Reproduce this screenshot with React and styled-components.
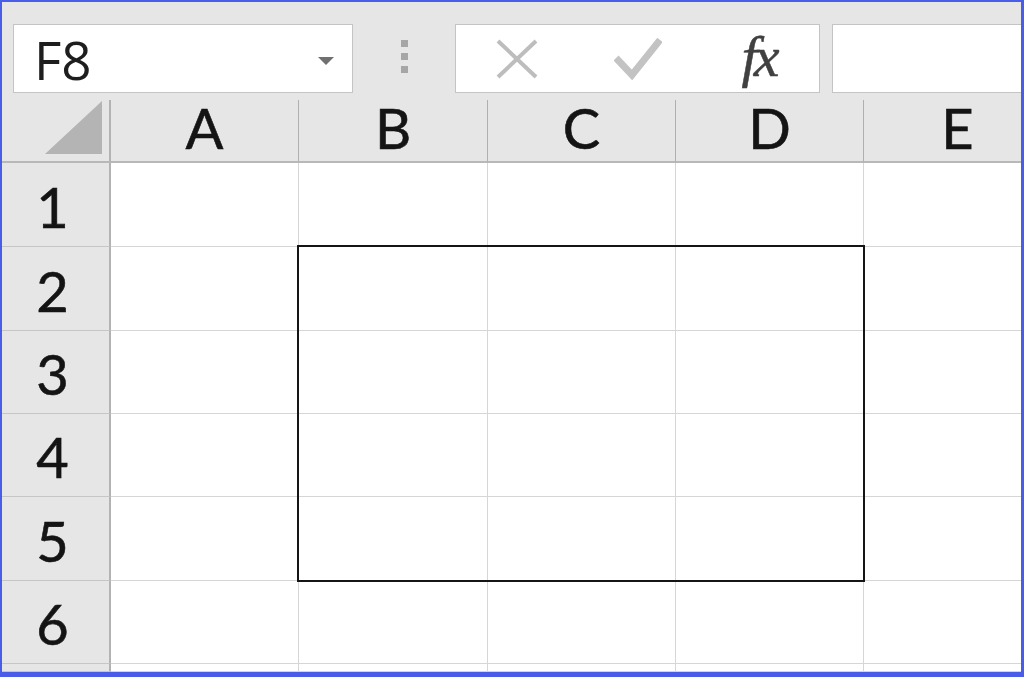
import React from "react";
import styled, { createGlobalStyle } from "styled-components";

const Global = createGlobalStyle`
  html, body { margin: 0; padding: 0; background: #ffffff; }
  * { box-sizing: border-box; }
`;

const Frame = styled.div`
  width: 1024px;
  height: 677px;
  border: 2px solid #4a5de8;
  border-right-width: 3px;
  border-bottom-width: 5px;
  background: #e6e6e6;
  overflow: hidden;
  display: flex;
  flex-direction: column;
`;

const Toolbar = styled.div`
  height: 98px;
  flex: none;
  display: flex;
  align-items: flex-start;
  padding: 22px 0 0 11px;
`;

const Box = styled.div`
  height: 69px;
  background: #ffffff;
  border: 1px solid #c4c4c4;
  display: flex;
  align-items: center;
`;

const NameBox = styled(Box)`
  width: 340px;
  justify-content: space-between;
  padding: 0 18px 0 20px;
  font-family: "Open Sans", "Noto Sans", sans-serif;
  font-size: 53px;
  color: #1e1e1e;
  line-height: 1;
`;

const NameText = styled.span`
  margin-top: 2px;
`;

const DropArrow = styled.span`
  width: 0;
  height: 0;
  border-left: 8px solid transparent;
  border-right: 8px solid transparent;
  border-top: 8px solid #707070;
  margin-top: 4px;
`;

const Grip = styled.div`
  width: 102px;
  height: 69px;
  display: flex;
  flex-direction: column;
  align-items: center;
  padding-top: 16px;
  gap: 6px;
`;

const Dot = styled.span`
  width: 7px;
  height: 7px;
  background: #a6a6a6;
`;

const FormulaButtons = styled(Box)`
  width: 365px;
  display: grid;
  grid-template-columns: repeat(3, 1fr);
  align-items: center;
  justify-items: center;
`;

const FxText = styled.span`
  font-family: "Liberation Serif", "Times New Roman", serif;
  font-style: italic;
  font-size: 58px;
  color: #404040;
  line-height: 1;
  margin-top: -4px;
  letter-spacing: -4px;
  -webkit-text-stroke: 0.5px #404040;
`;

const FormulaInput = styled(Box)`
  flex: 1;
  margin-left: 12px;
  border-right: none;
`;

const Sheet = styled.div`
  flex: 1;
  display: grid;
  grid-template-columns: 109px 188px 189px 188px 188px 188px;
  grid-template-rows: 63px 84px 84px 83px 83px 84px 83px 1fr;
  background: #ffffff;
`;

const Placed = styled.div`
  grid-column: ${(p) => p.$col};
  grid-row: ${(p) => p.$row};
`;

const Corner = styled(Placed)`
  background: #e6e6e6;
  border-right: 2px solid #b3b3b3;
  border-bottom: 2px solid #b8b8b8;
  display: flex;
  align-items: flex-end;
  justify-content: flex-end;
  padding: 0 7px 7px 0;
`;

const CornerTriangle = styled.span`
  width: 57px;
  height: 53px;
  background: #b4b4b4;
  clip-path: polygon(100% 0, 100% 100%, 0 100%);
`;

const HeaderText = styled(Placed)`
  font-family: Lato, "Open Sans", sans-serif;
  font-size: 56px;
  color: #141414;
  display: flex;
  align-items: center;
  justify-content: center;
  line-height: 1;
  -webkit-text-stroke: 0.6px #141414;
`;

const ColHeader = styled(HeaderText)`
  background: #e6e6e6;
  border-right: 1px solid #b0b0b0;
  border-bottom: 2px solid #b8b8b8;
  padding-bottom: 6px;
`;

const RowHeader = styled(HeaderText)`
  background: #e6e6e6;
  border-right: 2px solid #b3b3b3;
  border-bottom: 1px solid #c6c6c6;
  padding-right: 6px;
  padding-top: 4px;
`;

const Cell = styled(Placed)`
  border-right: 1px solid #d6d6d6;
  border-bottom: 1px solid #d6d6d6;
`;

const Selection = styled.div`
  grid-column: 3 / 6;
  grid-row: 3 / 7;
  border: 2px solid #151515;
  margin: -2px -1px -1px -2px;
  pointer-events: none;
  z-index: 1;
`;

const CancelIcon = () => (
  <svg width="42" height="40" viewBox="0 0 42 40">
    <path d="M2 2 L40 38 M40 2 L2 38" stroke="#bdbdbd" strokeWidth="4" fill="none" />
  </svg>
);

const EnterIcon = () => (
  <svg width="48" height="42" viewBox="0 0 48 42">
    <path d="M2 20 L18 37 L46 2" stroke="#c3c3c3" strokeWidth="7" fill="none" strokeLinejoin="miter" />
  </svg>
);

const columns = ["A", "B", "C", "D", "E"];
const rows = ["1", "2", "3", "4", "5", "6", ""];

export default function App() {
  return (
    <>
      <Global />
      <Frame>
        <Toolbar>
          <NameBox>
            <NameText>F8</NameText>
            <DropArrow />
          </NameBox>
          <Grip>
            <Dot />
            <Dot />
            <Dot />
          </Grip>
          <FormulaButtons>
            <CancelIcon />
            <EnterIcon />
            <FxText>fx</FxText>
          </FormulaButtons>
          <FormulaInput />
        </Toolbar>
        <Sheet>
          <Corner $col={1} $row={1}>
            <CornerTriangle />
          </Corner>
          {columns.map((c, ci) => (
            <ColHeader key={c} $col={ci + 2} $row={1}>
              {c}
            </ColHeader>
          ))}
          {rows.map((r, ri) => (
            <React.Fragment key={ri}>
              <RowHeader $col={1} $row={ri + 2}>
                {r}
              </RowHeader>
              {columns.map((c, ci) => (
                <Cell key={c + ri} $col={ci + 2} $row={ri + 2} />
              ))}
            </React.Fragment>
          ))}
          <Selection />
        </Sheet>
      </Frame>
    </>
  );
}
